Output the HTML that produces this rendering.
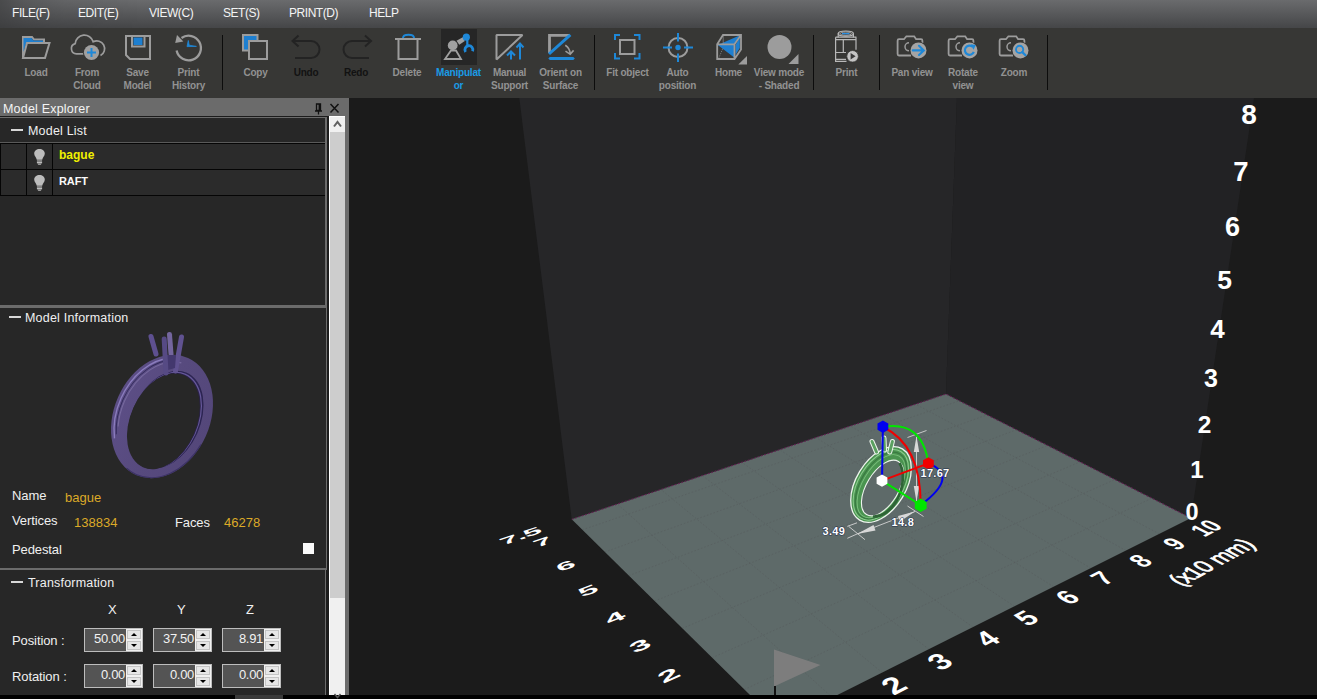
<!DOCTYPE html>
<html><head><meta charset="utf-8">
<style>
*{box-sizing:border-box;margin:0;padding:0}
html,body{width:1317px;height:699px;overflow:hidden;background:#1a1a1a;font-family:"Liberation Sans",sans-serif}
#menubar{position:absolute;left:0;top:0;width:1317px;height:28px;background:linear-gradient(#6a6b6d,#454648)}
#menubar:before{content:"";position:absolute;left:0;top:0;width:140px;height:28px;background:linear-gradient(90deg,rgba(0,0,0,.3) 0px,rgba(0,0,0,.16) 25px,rgba(0,0,0,.06) 65px,rgba(0,0,0,0) 140px);-webkit-mask-image:linear-gradient(#000,rgba(0,0,0,.35))}
.menu{position:absolute;top:6px;font-size:12px;line-height:14px;color:#f4f4f4;letter-spacing:-0.45px}
#toolbar{position:absolute;left:0;top:28px;width:1317px;height:70px;background:#373735}
.lbl{position:absolute;top:66px;width:60px;margin-left:-30px;font-size:10px;font-weight:bold;color:#929292;text-align:center;line-height:13px;white-space:nowrap;letter-spacing:-0.2px}
.sep{position:absolute;top:35px;width:1px;height:55px;background:#0c0c0c}
svg{position:absolute;overflow:visible}
.t{position:absolute;white-space:nowrap}
#panel{position:absolute;left:0;top:98px;width:349px;height:597px;background:#6b6b6b}
#ph{position:absolute;left:0;top:98px;width:349px;height:18px;background:#6b6b6b}
.sec{position:absolute;left:0;width:327px;background:#262626;border-right:1px solid #5a5a5a}
.cell{position:absolute;background:#2b2b2b}
.ptxt{font-size:12.5px;color:#f0f0f0;letter-spacing:0.2px}
.val{font-size:13px;color:#dcaa28;letter-spacing:0px}
.pt2{font-size:13px;color:#f0f0f0;letter-spacing:-0.1px}
.spin{position:absolute;width:59px;height:24px;background:#545454;border:1px solid #bdbdbd}
.spin .n{position:absolute;right:17px;top:2px;font-size:13px;color:#f2f2f2;letter-spacing:-0.3px}
.spin .b{position:absolute;right:0;top:0;width:16px;height:22px;background:#f0f0f0}
.spin .u,.spin .d{position:absolute;left:1px;width:14px;height:9px;background:#e6e6e6;border:1px solid #c4c4c4}
.spin .u{top:1px}.spin .d{top:12px}
.spin .u:after,.spin .d:after{content:"";position:absolute;left:3px;width:0;height:0;border-left:3px solid transparent;border-right:3px solid transparent}
.spin .u:after{top:2px;border-bottom:3px solid #000}.spin .d:after{top:2px;border-top:3px solid #000}
#bottom{position:absolute;left:0;top:695px;width:1317px;height:4px;background:#000}
</style></head><body>
<div id="menubar">
<div class="menu" style="left:12px">FILE(F)</div>
<div class="menu" style="left:78px">EDIT(E)</div>
<div class="menu" style="left:149px">VIEW(C)</div>
<div class="menu" style="left:223px">SET(S)</div>
<div class="menu" style="left:289px">PRINT(D)</div>
<div class="menu" style="left:369px">HELP</div>
</div>
<div id="toolbar"></div>
<div class="lbl" style="left:36px">Load</div>
<div class="lbl" style="left:87px">From<br>Cloud</div>
<div class="lbl" style="left:137.5px">Save<br>Model</div>
<div class="lbl" style="left:188.5px">Print<br>History</div>
<div class="lbl" style="left:255.5px">Copy</div>
<div class="lbl" style="left:306px;color:#121212">Undo</div>
<div class="lbl" style="left:356px;color:#121212">Redo</div>
<div class="lbl" style="left:407px">Delete</div>
<div style="position:absolute;left:441px;top:29px;width:36px;height:36px;background:#262626"></div>
<div class="lbl" style="left:458.5px;color:#1a9be6">Manipulat<br>or</div>
<div class="lbl" style="left:509.5px">Manual<br>Support</div>
<div class="lbl" style="left:560.5px">Orient on<br>Surface</div>
<div class="lbl" style="left:627.5px">Fit object</div>
<div class="lbl" style="left:677.5px">Auto<br>position</div>
<div class="lbl" style="left:728.5px">Home</div>
<div class="lbl" style="left:779px">View mode<br>- Shaded</div>
<div class="lbl" style="left:846.5px">Print</div>
<div class="lbl" style="left:912px">Pan view</div>
<div class="lbl" style="left:963px">Rotate<br>view</div>
<div class="lbl" style="left:1014px">Zoom</div>
<div class="sep" style="left:222px"></div>
<div class="sep" style="left:594px"></div>
<div class="sep" style="left:813px"></div>
<div class="sep" style="left:879px"></div>
<div class="sep" style="left:1047px"></div>
<svg width="1317" height="98" style="left:0;top:0" fill="none" stroke-linejoin="miter">
<g stroke="#9c9c9c" stroke-width="2">
 <!-- load -->
 <path d="M23,58 V37 H32 L34,39.5 H44 V43" />
 <polygon points="23.5,38 31.5,38 33.5,40.5 43,40.5 43,42 26.5,42 23.5,52" fill="#1e7fd0" stroke="none"/>
 <polygon points="27,43 49.5,43 45,58 23,58" fill="#373735"/>
 <!-- cloud -->
 <path d="M84,53.8 H76.5 A5.2,5.2 0 0 1 75.2,43.6 A9.2,9.2 0 0 1 93.2,41.8 A5.6,5.6 0 0 1 100.5,55.5" stroke-width="1.7"/>
 <circle cx="91.5" cy="52.5" r="8.6" fill="#373735" stroke="none"/>
 <circle cx="91.5" cy="52.5" r="7.6" fill="#a0a0a0" stroke="none"/>
 <path d="M91.5,48 V57 M87,52.5 H96" stroke="#1e88d8" stroke-width="2"/>
 <!-- save -->
 <path d="M126,36 H150 V59 H130 L126,55 Z"/>
 <path d="M132,36 V46.5 H144.5 V36"/>
 <rect x="133.5" y="37.5" width="9" height="7.5" fill="#1e7fd0" stroke="none"/>
 <!-- history -->
 <path d="M181.5,38 A12.3,12.3 0 1 1 176.6,50.6" stroke-width="2.3"/>
 <polygon points="175.2,43 177,35 183.4,41.6" fill="#9c9c9c" stroke="none"/>
 <path d="M188.3,40.5 L187,46.6 L196.4,46.4 L189.2,45.2 Z" fill="#1e88d8" stroke="#1e88d8" stroke-width="0.8"/>
 <!-- copy -->
 <rect x="243" y="35" width="14.5" height="15.5" fill="#1e7fd0"/>
 <rect x="249" y="41" width="18" height="18" fill="#373735"/>
 <!-- delete -->
 <path d="M395,39 H421 M398.5,39 V59 H417.5 V39"/>
 <path d="M403,38 C403,33.5 414,33.5 414,38" stroke="#1e88d8"/>
</g>
<g stroke="#232323" stroke-width="2">
 <path d="M298.5,35.5 L292.5,41 L298.5,46.5 M293,41 H311 A8.5,8.5 0 0 1 311,58 H295"/>
 <path d="M365,35.5 L371,41 L365,46.5 M370.5,41 H352 A8.5,8.5 0 0 0 352,58 H369"/>
</g>
<g stroke="#9c9c9c" stroke-width="2">
 <!-- manipulator -->
 <circle cx="452.7" cy="45.4" r="4.9" fill="#a0a0a0" stroke="none"/>
 <polygon points="445,59 461,59 456,50.5 451,50.5" stroke-width="1.8" stroke="#a0a0a0"/>
 <polygon points="456.5,40.8 459.3,44.8 464.8,41 462.8,37.2" fill="#a0a0a0" stroke="none"/>
 <circle cx="466.3" cy="37.2" r="3.6" fill="#1e88d8" stroke="none"/>
 <path d="M467.3,40 V46" stroke="#1e88d8" stroke-width="2.2"/>
 <path d="M465.6,52 A4,4 0 1 1 472.6,51.2" stroke="#1e88d8" stroke-width="2.8"/>
 <!-- manual support -->
 <polygon points="496.5,35 522.5,35 496.5,59.5" stroke-linejoin="bevel"/>
 <path d="M511,59.5 V52 M507,55.5 L511,51.5 L515,55.5 M520,59.5 V44 M516.5,47.5 L520,43.5 L523.5,47.5" stroke="#1e88d8"/>
 <!-- orient -->
 <path d="M549.5,53 V35.4 H569.5" stroke-width="2.8"/>
 <path d="M549,54 L570.4,34.9" stroke="#1e88d8" stroke-width="3"/>
 <polygon points="548.3,58.5 549.8,57 573.3,57 574.8,58.5 573.3,60 549.8,60" fill="#1e88d8" stroke="none"/>
 <path d="M565.3,45.3 C568,47 570,50 570.2,54 M565.5,51.2 L570.2,54.3 L573.6,50.4" stroke-width="1.6"/>
 <!-- fit -->
 <path d="M615,40 V35 H620 M634,35 H639.5 V40 M639.5,53 V58.5 H634 M620,58.5 H615 V53" stroke="#1e88d8"/>
 <rect x="620" y="40" width="14.5" height="14" />
 <!-- auto position -->
 <circle cx="678" cy="47.5" r="9.5"/>
 <path d="M663,47.5 H672 M684,47.5 H693 M678,33 V41.5 M678,53.5 V62" stroke="#1e88d8" stroke-width="2"/>
 <circle cx="678" cy="47.5" r="2.7" fill="#1e88d8" stroke="none"/>
 <!-- home -->
 <polygon points="717.8,45 739.5,35.6 734.2,45 734.2,57.5" fill="#1e7fd0" stroke="none"/>
 <polygon points="735.5,45 739.8,37.5 739.8,48 735.5,55" fill="#1e7fd0" stroke="none"/>
 <path d="M719,57.5 L723,48" stroke-width="0.7" stroke-dasharray="1 1"/>
 <path d="M717.2,44.3 L723,35 H741 V49.5 L734.5,59 H717.2 Z M717.2,44.3 H734.5 V59 M734.5,44.3 L741,35" stroke-width="1.8"/>
 <path d="M723.2,35.5 V44" stroke-width="0.6"/>
 <polygon points="738.3,64.4 747,64.4 747,56" fill="#9c9c9c" stroke="none"/>
 <!-- view mode -->
 <circle cx="779.5" cy="47" r="12" fill="#9c9c9c" stroke="none"/>
 <polygon points="788.5,64 798.5,64 798.5,54" fill="#9c9c9c" stroke="none"/>
 <!-- print -->
 <g stroke="#b8b8b8" stroke-width="1.2">
 <ellipse cx="845.8" cy="33.6" rx="7.6" ry="2.6"/>
 <ellipse cx="845.8" cy="33.6" rx="5.8" ry="1.6" stroke-width="0.8"/>
 <path d="M838.2,33.6 V37.5 M853.4,33.6 V37.5"/>
 <path d="M835.6,37.2 H856.4 M835.6,37.2 V61.4 H846.5 M856,37.2 V49.8 M835.6,39.6 H856 M843.3,39.6 V52.5 M835.6,52.5 H846 M835.6,59.4 H846"/>
 </g>
 <path d="M842,33.6 H849.5" stroke="#2a8ee0" stroke-width="1.3"/>
 <circle cx="852.6" cy="56.3" r="5.8" fill="#c4c4c4" stroke="#373735" stroke-width="0.8"/>
 <polygon points="850.6,53 850.6,59.6 855.6,56.3" fill="#3a3a3a" stroke="none"/>
</g>
<g transform="translate(0,0)" stroke="#9c9c9c" stroke-width="1.8" fill="none">
 <path d="M911,55.5 H899 Q897.6,55.5 897.6,54 V40.7 Q897.6,39.2 899,39.2 H904 L906.4,36.3 H914.2 L916.1,39.2 H921 Q922.4,39.2 922.4,40.7 V43"/>
 <path d="M909,42.8 A4,4 0 0 0 909,50.8" stroke-width="1.5"/>
 <circle cx="918.5" cy="50.4" r="8.8" fill="#373735" stroke="none"/>
 <circle cx="918.5" cy="50.4" r="8" fill="#a4a4a4" stroke="none"/>
 <path d="M912.8,50.4 H923.6 M919,45.8 L923.8,50.4 L919,55" stroke="#1e88d8" stroke-width="2.1" stroke-linecap="round"/>
</g>
<g transform="translate(51,0)" stroke="#9c9c9c" stroke-width="1.8" fill="none">
 <path d="M911,55.5 H899 Q897.6,55.5 897.6,54 V40.7 Q897.6,39.2 899,39.2 H904 L906.4,36.3 H914.2 L916.1,39.2 H921 Q922.4,39.2 922.4,40.7 V43"/>
 <path d="M909,42.8 A4,4 0 0 0 909,50.8" stroke-width="1.5"/>
 <circle cx="918.5" cy="50.4" r="8.8" fill="#373735" stroke="none"/>
 <circle cx="918.5" cy="50.4" r="8" fill="#a4a4a4" stroke="none"/>
 <path d="M922.8,51.8 A4.6,4.6 0 1 1 921.6,46.8" stroke="#1e88d8" stroke-width="2.2"/><polygon points="919.5,44.3 924.8,45 922.5,49.8" fill="#1e88d8" stroke="none"/>
</g>
<g transform="translate(102,0)" stroke="#9c9c9c" stroke-width="1.8" fill="none">
 <path d="M911,55.5 H899 Q897.6,55.5 897.6,54 V40.7 Q897.6,39.2 899,39.2 H904 L906.4,36.3 H914.2 L916.1,39.2 H921 Q922.4,39.2 922.4,40.7 V43"/>
 <path d="M909,42.8 A4,4 0 0 0 909,50.8" stroke-width="1.5"/>
 <circle cx="918.5" cy="50.4" r="8.8" fill="#373735" stroke="none"/>
 <circle cx="918.5" cy="50.4" r="8" fill="#a4a4a4" stroke="none"/>
 <circle cx="917.6" cy="49.4" r="3.6" stroke="#1e88d8" stroke-width="1.9"/><path d="M920.3,52.1 L923.5,55.3" stroke="#1e88d8" stroke-width="2.3" stroke-linecap="round"/>
</g>
</svg>


<div id="panel"></div>
<div class="t ptxt" style="left:3px;top:102px;color:#f4f4f4">Model Explorer</div>
<div style="position:absolute;left:0;top:116px;width:329px;height:579px;background:#1c1c1c"></div>
<!-- model list section -->
<div style="position:absolute;left:0;top:117px;width:327px;height:191px;background:#6b6b6b"></div>
<div style="position:absolute;left:0;top:118px;width:325px;height:187px;background:#272727"></div>
<div style="position:absolute;left:0;top:142px;width:325px;height:1px;background:#5a5a5a"></div>
<div style="position:absolute;left:0;top:143px;width:325px;height:53px;background:#050505"></div>
<div class="cell" style="left:1px;top:144px;width:25px;height:25px"></div>
<div class="cell" style="left:27px;top:144px;width:25px;height:25px"></div>
<div class="cell" style="left:53px;top:144px;width:272px;height:25px"></div>
<div class="cell" style="left:1px;top:170px;width:25px;height:25px"></div>
<div class="cell" style="left:27px;top:170px;width:25px;height:25px"></div>
<div class="cell" style="left:53px;top:170px;width:272px;height:25px"></div>
<div style="position:absolute;left:11px;top:129px;width:12px;height:2px;background:#d8d8d8"></div>
<div class="t ptxt" style="left:28px;top:124px">Model List</div>
<div class="t" style="left:59px;top:148px;font-size:12px;font-weight:bold;color:#f0f000;letter-spacing:0px">bague</div>
<div class="t" style="left:59px;top:175px;font-size:11px;font-weight:bold;color:#fafafa;letter-spacing:-0.1px">RAFT</div>
<svg width="349" height="699" style="left:0;top:0">
 <g fill="#bcbcbc">
 <path d="M36.8,159.8 C36.2,157.3 34.2,156 34.2,153.6 C34.2,150.8 36.6,149 39.5,149 C42.4,149 44.8,150.8 44.8,153.6 C44.8,156 42.8,157.3 42.2,159.8 Z"/>
 <rect x="36.9" y="160.4" width="5.2" height="1.2"/><rect x="36.9" y="162" width="5.2" height="1.2"/><path d="M37.3,163.5 H41.7 L40.7,164.7 H38.3 Z"/>
 <path d="M36.8,185.8 C36.2,183.3 34.2,182 34.2,179.6 C34.2,176.8 36.6,175 39.5,175 C42.4,175 44.8,176.8 44.8,179.6 C44.8,182 42.8,183.3 42.2,185.8 Z"/>
 <rect x="36.9" y="186.4" width="5.2" height="1.2"/><rect x="36.9" y="188" width="5.2" height="1.2"/><path d="M37.3,189.5 H41.7 L40.7,190.7 H38.3 Z"/>
 </g>
</svg>
<!-- model information section -->
<div style="position:absolute;left:0;top:308px;width:327px;height:262px;background:#6b6b6b"></div>
<div style="position:absolute;left:0;top:308px;width:326px;height:260px;background:#272727"></div>
<div style="position:absolute;left:9px;top:316px;width:12px;height:2px;background:#d8d8d8"></div>
<div class="t ptxt" style="left:25px;top:311px">Model Information</div>
<svg width="349" height="699" style="left:0;top:0">
 <defs>
  <linearGradient id="rg1" x1="0" y1="0" x2="1" y2="0">
   <stop offset="0" stop-color="#5c4e86"/><stop offset="0.5" stop-color="#574a7e"/><stop offset="1" stop-color="#54477a"/>
  </linearGradient>
  <clipPath id="outclip"><ellipse cx="162" cy="416.5" rx="48" ry="64" transform="rotate(24 162 416.5)"/></clipPath>
 </defs>
 <ellipse cx="162" cy="416.5" rx="48" ry="64" transform="rotate(24 162 416.5)" fill="url(#rg1)"/>
 <g clip-path="url(#outclip)" fill="none">
  <ellipse cx="162.5" cy="417" rx="45.5" ry="61.5" transform="rotate(24 162.5 417)" stroke="#8a7cbe" stroke-width="1.4" stroke-dasharray="108 400" stroke-dashoffset="-128"/>
  <ellipse cx="163" cy="417.5" rx="43.8" ry="59.8" transform="rotate(24 163 417.5)" stroke="#30285a" stroke-width="0.9" stroke-dasharray="108 400" stroke-dashoffset="-128"/>
  <ellipse cx="163.2" cy="418" rx="42.2" ry="58.3" transform="rotate(24 163.2 418)" stroke="#76699e" stroke-width="1.1" stroke-dasharray="100 400" stroke-dashoffset="-132"/>
  <ellipse cx="162" cy="416.5" rx="48" ry="64" transform="rotate(24 162 416.5)" stroke="#3c3266" stroke-width="2" stroke-dasharray="90 400" stroke-dashoffset="-10"/>
 </g>
 <ellipse cx="166" cy="419.5" rx="34.2" ry="51.2" transform="rotate(24 166 419.5)" fill="#2c2452"/>
 <ellipse cx="165" cy="420.2" rx="33.6" ry="50.8" transform="rotate(24 165 420.2)" fill="#66589a"/>
 <ellipse cx="164.2" cy="420.8" rx="33.2" ry="50.5" transform="rotate(24 164.2 420.8)" fill="#2a2248"/>
 <ellipse cx="163.4" cy="421.3" rx="33" ry="50.3" transform="rotate(24 163.4 421.3)" fill="#272727"/>
 <g stroke-linecap="round">
  <path d="M151,336.5 L156,354" stroke="#5e5090" stroke-width="5"/>
  <path d="M169.5,334.5 L171,354" stroke="#74669e" stroke-width="5"/>
  <path d="M181.5,337 L175.5,371" stroke="#605290" stroke-width="5"/>
  <path d="M166,355 L176,355 L175,368 L168,370 Z" fill="#43386e" stroke="none"/>
  <path d="M164.2,339 L166,373" stroke="#564a84" stroke-width="5"/>
 </g>
</svg>

<div class="t pt2" style="left:12px;top:488px">Name</div>
<div class="t val" style="left:65px;top:490px">bague</div>
<div class="t pt2" style="left:12px;top:513px">Vertices</div>
<div class="t val" style="left:74px;top:515px">138834</div>
<div class="t pt2" style="left:175px;top:515px">Faces</div>
<div class="t val" style="left:224px;top:515px">46278</div>
<div class="t pt2" style="left:12px;top:542px">Pedestal</div>
<div style="position:absolute;left:303px;top:543px;width:11px;height:11px;background:#fafafa"></div>
<!-- transformation -->
<div style="position:absolute;left:0;top:570px;width:326px;height:125px;background:#272727;border-right:1px solid #6b6b6b"></div>
<div style="position:absolute;left:11px;top:581px;width:12px;height:2px;background:#d8d8d8"></div>
<div class="t ptxt" style="left:28px;top:576px">Transformation</div>
<div class="t pt2" style="left:108px;top:602px">X</div>
<div class="t pt2" style="left:177px;top:602px">Y</div>
<div class="t pt2" style="left:246px;top:602px">Z</div>
<div class="t pt2" style="left:12px;top:633px">Position :</div>
<div class="t pt2" style="left:12px;top:669px">Rotation :</div>
<div class="spin" style="left:84px;top:628px"><span class="n">50.00</span><div class="b"><div class="u"></div><div class="d"></div></div></div>
<div class="spin" style="left:153px;top:628px"><span class="n">37.50</span><div class="b"><div class="u"></div><div class="d"></div></div></div>
<div class="spin" style="left:222px;top:628px"><span class="n">8.91</span><div class="b"><div class="u"></div><div class="d"></div></div></div>
<div class="spin" style="left:84px;top:664px"><span class="n">0.00</span><div class="b"><div class="u"></div><div class="d"></div></div></div>
<div class="spin" style="left:153px;top:664px"><span class="n">0.00</span><div class="b"><div class="u"></div><div class="d"></div></div></div>
<div class="spin" style="left:222px;top:664px"><span class="n">0.00</span><div class="b"><div class="u"></div><div class="d"></div></div></div>
<!-- scrollbar -->
<div style="position:absolute;left:329px;top:116px;width:16px;height:579px;background:#f0f0f0;border-left:1px solid #fff;border-top:1px solid #fff"></div>
<div style="position:absolute;left:330px;top:132px;width:15px;height:466px;background:#cdcdcd"></div>
<svg width="349" height="699" style="left:0;top:0">
 <path d="M334,126.5 L337.5,122 L341,126.5" stroke="#606060" stroke-width="2" fill="none"/>
 <!-- pin -->
 <path d="M315,111 H322 M318.5,111 V114.5 M316.5,104 H320.5 V110.5 H316.5 Z" stroke="#111" stroke-width="1.3" fill="none"/><rect x="318.6" y="104" width="2.2" height="6.5" fill="#111"/>
 <path d="M330.5,104 L338.5,112.5 M338.5,104 L330.5,112.5" stroke="#111" stroke-width="1.5"/>
</svg>


<!--VP_START--><svg width="1317" height="699" style="left:0;top:0">
<defs><clipPath id="vpclip"><rect x="349" y="98" width="968" height="597"/></clipPath></defs>
<g clip-path="url(#vpclip)">
<rect x="349" y="98" width="968" height="597" fill="#1b1b1b"/>
<polygon points="519.3,98 957,98 946,394 571.7,519.3" fill="#262628"/>
<polygon points="957,98 1254,98 1191,518 946,394" fill="#222224"/>
<polygon points="571.7,519.3 946,394 1191,518 837.4,695 750,695" fill="#5e6a69"/>
<path d="M571.7,519.3 L946,394 L1191,518" fill="none" stroke="#5e2450" stroke-width="1.1" stroke-dasharray="2 1.5"/>
<clipPath id="floorclip"><polygon points="571.7,519.3 946,394 1191,518 837.4,695 750,695"/></clipPath>
<path clip-path="url(#floorclip)" d="M744.4,689.5 L1151.8,498.2 M712.2,657.7 L1115.0,479.5 M682.3,628.3 L1080.2,461.9 M654.6,601.0 L1047.5,445.4 M628.9,575.6 L1016.5,429.7 M604.8,552.0 L987.2,414.8 M582.4,529.8 L959.4,400.8 M832.4,697.5 L617.4,504.0 M882.2,672.6 L660.9,489.4 M928.9,649.2 L702.4,475.6 M972.9,627.1 L741.9,462.3 M1014.4,606.4 L779.8,449.7 M1053.6,586.7 L815.9,437.5 M1090.8,568.2 L850.5,426.0 M1125.9,550.6 L883.7,414.9 M1159.3,533.9 L915.5,404.2" stroke="#54585a" stroke-width="0.8" stroke-dasharray="1.5 2" stroke-opacity="0.55" fill="none"/>
<polygon points="774,649.5 820.5,665 774,686.5" fill="#7d7d7d"/>
<rect x="774" y="686" width="2" height="9" fill="#111"/>
<text x="1249" y="124.1" font-size="28" font-weight="bold" fill="#fff" text-anchor="middle" font-family="Liberation Sans">8</text>
<text x="1241" y="180.9" font-size="27.5" font-weight="bold" fill="#fff" text-anchor="middle" font-family="Liberation Sans">7</text>
<text x="1232.5" y="235.7" font-size="27" font-weight="bold" fill="#fff" text-anchor="middle" font-family="Liberation Sans">6</text>
<text x="1224.5" y="288.5" font-size="26.5" font-weight="bold" fill="#fff" text-anchor="middle" font-family="Liberation Sans">5</text>
<text x="1217.5" y="338.4" font-size="26" font-weight="bold" fill="#fff" text-anchor="middle" font-family="Liberation Sans">4</text>
<text x="1211" y="387.0" font-size="25" font-weight="bold" fill="#fff" text-anchor="middle" font-family="Liberation Sans">3</text>
<text x="1204.5" y="432.8" font-size="24.5" font-weight="bold" fill="#fff" text-anchor="middle" font-family="Liberation Sans">2</text>
<text x="1197" y="477.6" font-size="24" font-weight="bold" fill="#fff" text-anchor="middle" font-family="Liberation Sans">1</text>
<text x="1192" y="520.0" font-size="23.5" font-weight="bold" fill="#fff" text-anchor="middle" font-family="Liberation Sans">0</text>
<text transform="matrix(2.175,-0.727,0.557,0.611,520,536)" x="0" y="5.04" font-size="14" font-weight="bold" fill="#fff" text-anchor="middle" font-family="Liberation Sans" letter-spacing="-0.5" >7.5</text>
<text transform="matrix(2.168,-0.740,0.583,0.622,542.5,541.8)" x="0" y="5.04" font-size="14" font-weight="bold" fill="#fff" text-anchor="middle" font-family="Liberation Sans" letter-spacing="0" >7</text>
<text transform="matrix(2.218,-0.795,0.626,0.667,565.5,565.6)" x="0" y="5.04" font-size="14" font-weight="bold" fill="#fff" text-anchor="middle" font-family="Liberation Sans" letter-spacing="0" >6</text>
<text transform="matrix(2.269,-0.854,0.671,0.716,588,590.4)" x="0" y="5.04" font-size="14" font-weight="bold" fill="#fff" text-anchor="middle" font-family="Liberation Sans" letter-spacing="0" >5</text>
<text transform="matrix(2.320,-0.920,0.723,0.770,614.7,617.3)" x="0" y="5.04" font-size="14" font-weight="bold" fill="#fff" text-anchor="middle" font-family="Liberation Sans" letter-spacing="0" >4</text>
<text transform="matrix(2.375,-0.992,0.778,0.830,639.8,645.5)" x="0" y="5.04" font-size="14" font-weight="bold" fill="#fff" text-anchor="middle" font-family="Liberation Sans" letter-spacing="0" >3</text>
<text transform="matrix(2.426,-1.071,0.839,0.894,668.5,675)" x="0" y="5.04" font-size="14" font-weight="bold" fill="#fff" text-anchor="middle" font-family="Liberation Sans" letter-spacing="0" >2</text>
<text transform="matrix(2.089,-1.070,1.651,1.372,893.6,685)" x="0" y="4.86" font-size="13.5" font-weight="bold" fill="#fff" text-anchor="middle" font-family="Liberation Sans" letter-spacing="0" >2</text>
<text transform="matrix(1.966,-1.007,1.677,1.292,939.4,661.3)" x="0" y="4.86" font-size="13.5" font-weight="bold" fill="#fff" text-anchor="middle" font-family="Liberation Sans" letter-spacing="0" >3</text>
<text transform="matrix(1.847,-0.948,1.702,1.217,987,638.5)" x="0" y="4.86" font-size="13.5" font-weight="bold" fill="#fff" text-anchor="middle" font-family="Liberation Sans" letter-spacing="0" >4</text>
<text transform="matrix(1.747,-0.895,1.715,1.151,1026,617.7)" x="0" y="4.86" font-size="13.5" font-weight="bold" fill="#fff" text-anchor="middle" font-family="Liberation Sans" letter-spacing="0" >5</text>
<text transform="matrix(1.647,-0.845,1.727,1.087,1067,597)" x="0" y="4.86" font-size="13.5" font-weight="bold" fill="#fff" text-anchor="middle" font-family="Liberation Sans" letter-spacing="0" >6</text>
<text transform="matrix(1.561,-0.799,1.731,1.029,1102,577.8)" x="0" y="4.86" font-size="13.5" font-weight="bold" fill="#fff" text-anchor="middle" font-family="Liberation Sans" letter-spacing="0" >7</text>
<text transform="matrix(1.478,-0.760,1.741,0.979,1140,560.7)" x="0" y="4.86" font-size="13.5" font-weight="bold" fill="#fff" text-anchor="middle" font-family="Liberation Sans" letter-spacing="0" >8</text>
<text transform="matrix(1.403,-0.721,1.743,0.930,1173.8,543.6)" x="0" y="4.86" font-size="13.5" font-weight="bold" fill="#fff" text-anchor="middle" font-family="Liberation Sans" letter-spacing="0" >9</text>
<text transform="matrix(1.334,-0.687,1.744,0.886,1205.6,528)" x="0" y="4.86" font-size="13.5" font-weight="bold" fill="#fff" text-anchor="middle" font-family="Liberation Sans" letter-spacing="-0.4" >10</text>
<text transform="matrix(1.301,-0.709,1.581,0.841,1211,562)" x="0" y="5.04" font-size="14" font-weight="normal" fill="#fff" text-anchor="middle" font-family="Liberation Sans" letter-spacing="-0.2" stroke="#fff" stroke-width="0.5">(x10 mm)</text>
<g id="gizmo">
 <!-- ring -->
 <ellipse cx="881" cy="484.5" rx="25" ry="41.5" transform="rotate(31 881 484.5)" fill="#4a9450" stroke="#eef4ee" stroke-width="1.3"/>
 <ellipse cx="880.8" cy="484.8" rx="22.3" ry="38.8" transform="rotate(31 880.8 484.8)" fill="none" stroke="#8ccc8e" stroke-width="1.1"/>
 <ellipse cx="881" cy="485.5" rx="20.2" ry="36.8" transform="rotate(31 881 485.5)" fill="none" stroke="#3a7a42" stroke-width="1.2"/>
 <ellipse cx="881.2" cy="486.2" rx="18.6" ry="35" transform="rotate(31 881.2 486.2)" fill="none" stroke="#7cc07e" stroke-width="0.9"/>
 <ellipse cx="882.5" cy="488" rx="16" ry="31" transform="rotate(31 882.5 488)" fill="#5e6a69" stroke="#eef4ee" stroke-width="1.1"/>
 <path d="M899.5,463 C905,472 903.5,488 896.5,501 C890,512 881,517 873,516.5" fill="none" stroke="#2e6436" stroke-width="2.6"/>
 <!-- prongs -->
 <g stroke="#eef4ee" stroke-width="5" stroke-linecap="round"><path d="M872,441.5 L876.5,452 M884,438 L884.5,450 M892.4,441.5 L889.8,452"/></g>
 <g stroke="#5aa060" stroke-width="3" stroke-linecap="round"><path d="M872,441.5 L876.5,452 M884,438 L884.5,450 M892.4,441.5 L889.8,452"/></g>
 <!-- dimension lines -->
 <g stroke="#d4d4d4" stroke-width="0.9" fill="none">
  <path d="M916.5,437 V501"/>
  <path d="M907.5,437.5 L926.5,430.5"/>
  <path d="M907.5,506 L923.5,516.5"/>
  <path d="M857,534 L915,511.5"/>
  <path d="M848.7,526.4 L865,539.7"/>
  <path d="M847.3,538.3 L857,534"/>
  <path d="M847.3,526.4 L857,522.8"/>
 </g>
 <g fill="#d8d8d8">
  <polygon points="916.5,436 913.8,452 919.2,452"/>
  <polygon points="916.5,502 913.8,486 919.2,486"/>
  <polygon points="857,534 873.5,525 875.5,530.5"/>
  <polygon points="915,511.5 898,516 900,521.5"/>
 </g>
 <!-- gizmo arcs -->
 <g fill="none" stroke-width="2">
  <path d="M883,427 Q922,420 928.4,463.4" stroke="#00e600"/>
  <path d="M883,427 Q921,445 920.7,505" stroke="#f00000"/>
  <path d="M928.4,463.4 Q960,476 920.7,505" stroke="#0000f0"/>
  <path d="M882,480.6 L882.9,426.7" stroke="#0000f0"/>
  <path d="M882,480.6 L928.4,463.4" stroke="#f00000"/>
  <path d="M882,480.6 L920.7,505.1" stroke="#00e600"/>
 </g>
 <polygon points="882.9,420.5 888.3,423.6 888.3,429.8 882.9,432.9 877.5,429.8 877.5,423.6" fill="#0000f0"/>
 <polygon points="882.0,474.4 887.4,477.5 887.4,483.7 882.0,486.8 876.6,483.7 876.6,477.5" fill="#ffffff"/>
 <polygon points="928.4,457.2 933.8,460.3 933.8,466.5 928.4,469.6 923.0,466.5 923.0,460.3" fill="#f00000"/>
 <polygon points="920.7,498.5 926.6,501.9 926.6,508.7 920.7,512.1 914.8,508.7 914.8,501.9" fill="#00e600"/>
 <!-- labels -->
 <g font-family="Liberation Sans" font-weight="bold" font-size="11" fill="#ffffff" stroke="#22304a" stroke-width="1.1" paint-order="stroke" stroke-linejoin="round" letter-spacing="0.3">
  <text x="920.5" y="477">17.67</text>
  <text x="891.5" y="526.3">14.8</text>
  <text x="822.5" y="535">3.49</text>
 </g>
</g>

</g></svg><!--VP_END-->
<div id="bottom"></div>
<div style="position:absolute;left:235px;top:695px;width:48px;height:4px;background:#3a3a3a"></div>
<svg width="1317" height="699" style="left:0;top:0"><path d="M334.5,694 L337.5,697.5 L340.5,694" stroke="#555" stroke-width="1.5" fill="none"/></svg>
</body></html>
